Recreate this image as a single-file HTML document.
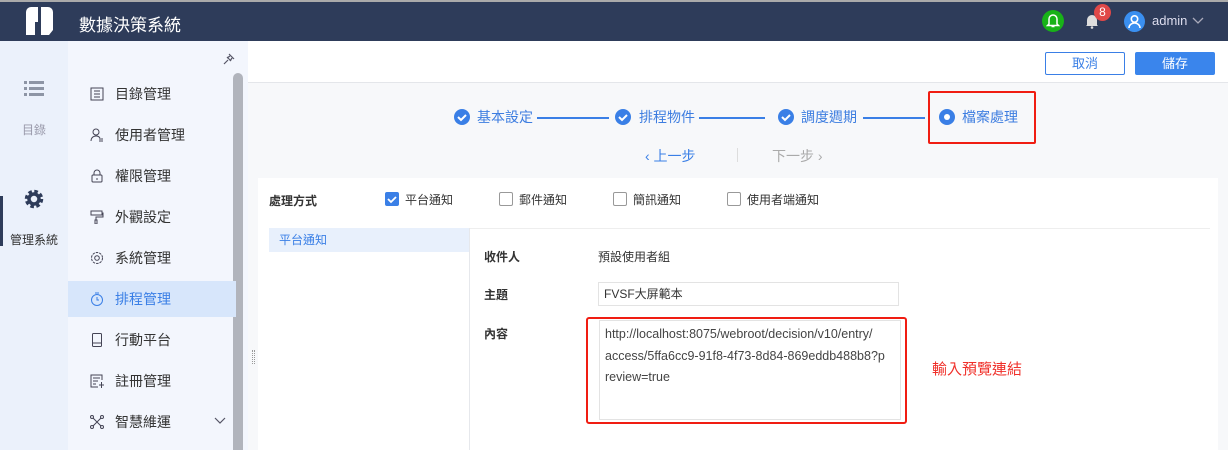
<!DOCTYPE html>
<html><head><meta charset="utf-8"><style>
*{margin:0;padding:0;box-sizing:border-box}
body{width:1228px;height:450px;overflow:hidden;position:relative;background:#f7f8fa;font-family:"Liberation Sans","Noto Sans CJK TC",sans-serif;font-size:13px;color:#333}
.a{position:absolute}
.hd{left:0;top:0;width:1228px;height:41px;background:#2e3c5a;border-top:2px solid #aaa}
.rail{left:0;top:41px;width:68px;height:409px;background:#ebf1fb}
.menu{left:68px;top:41px;width:180px;height:409px;background:#f3f6fd}
.mi{position:absolute;left:0;width:166px;height:36px;line-height:36px;padding-left:47px;font-size:14px;color:#333}
.ic{position:absolute;left:22px;top:11px;width:14px;height:14px}
.step{position:absolute;top:109px;font-size:14px;color:#3d7de0;line-height:16px}
.ck{position:absolute;width:16px;height:16px;border-radius:50%;background:#3a7fe6;top:109px}
.ln{position:absolute;top:117px;height:2px;background:#3a7fe6}
.cb{position:absolute;top:192px;width:14px;height:14px;border:1px solid #999;border-radius:2px;background:#fff}
.cl{position:absolute;top:191px;font-size:12px;color:#333}
</style></head><body>
<div class="a hd">
 <svg class="a" style="left:26px;top:5px" width="27" height="28" viewBox="0 0 27 28"><path d="M5 0h17a5 5 0 0 1 5 5v18l-4 5H0V5a5 5 0 0 1 5-5z" fill="#fff"/><rect x="12" y="0" width="3" height="11" fill="#2e3c5a"/><rect x="9" y="11" width="6" height="17" fill="#2e3c5a"/><rect x="9" y="11" width="3" height="4" fill="#fff"/></svg>
 <div class="a" style="left:79px;top:9px;color:#fff;font-size:17px">數據決策系統</div>
 <div class="a" style="left:1042px;top:8px;width:22px;height:22px;border-radius:50%;background:#18b218"></div>
 <svg class="a" style="left:1046px;top:11px" width="14" height="15" viewBox="0 0 14 15"><path d="M3 11V6a4 4 0 0 1 8 0v5l1.5 1.5h-11z M5.5 13.5h3" fill="none" stroke="#fff" stroke-width="1.5"/></svg>
 <svg class="a" style="left:1085px;top:11px" width="14" height="16" viewBox="0 0 14 16"><path d="M2 12V7a5 5 0 0 1 10 0v5l1 1H1z" fill="#ddd"/><circle cx="7" cy="14.5" r="1.3" fill="#ddd"/></svg>
 <div class="a" style="left:1094px;top:2px;width:17px;height:17px;border-radius:50%;background:#e04848;color:#fff;font-size:12px;text-align:center;line-height:17px">8</div>
 <div class="a" style="left:1124px;top:9px;width:21px;height:21px;border-radius:50%;background:#3a8ff0"></div>
 <svg class="a" style="left:1124px;top:9px" width="21" height="21" viewBox="0 0 21 21"><circle cx="10.5" cy="8" r="3.2" fill="none" stroke="#fff" stroke-width="1.6"/><path d="M5 17a5.5 5 0 0 1 11 0" fill="none" stroke="#fff" stroke-width="1.6"/></svg>
 <div class="a" style="left:1152px;top:11px;color:#dde;font-size:13px">admin</div>
 <svg class="a" style="left:1192px;top:15px" width="12" height="8"><path d="M1 1l5 5 5-5" fill="none" stroke="#aab" stroke-width="1.3"/></svg>
</div>
<div class="a rail">
 <svg class="a" style="left:24px;top:40px" width="20" height="15"><g fill="#8d95a5"><rect x="0" y="0" width="3" height="3"/><rect x="5" y="0" width="15" height="3"/><rect x="0" y="6" width="3" height="3"/><rect x="5" y="6" width="15" height="3"/><rect x="0" y="12" width="3" height="3"/><rect x="5" y="12" width="15" height="3"/></g></svg>
 <div class="a" style="left:22px;top:80px;color:#99a;font-size:12px">目錄</div>
 <div class="a" style="left:0;top:155px;width:3px;height:50px;background:#2e3c5a"></div>
 <svg class="a" style="left:24px;top:148px" width="20" height="20" viewBox="0 0 20 20"><circle cx="10" cy="10" r="7.5" fill="none" stroke="#2e3c5a" stroke-width="3.5" stroke-dasharray="3.5 2.4"/><circle cx="10" cy="10" r="5" fill="none" stroke="#2e3c5a" stroke-width="3.5"/></svg>
 <div class="a" style="left:10px;top:190px;color:#333;font-size:12px">管理系統</div>
</div>
<div class="a menu">
 <svg class="a" style="left:154px;top:11px" width="14" height="14"><path d="M2 12l4-4M5 5l4 4M7 2l5 5M8 4l-3 2M10 6l-2 3" stroke="#556" fill="none" stroke-width="1.2"/></svg>
 <div class="a" style="left:165px;top:32px;width:10px;height:377px;background:#b1b4bc;border-radius:5px 5px 0 0"></div>
 <div class="mi" style="top:35px"><svg class="ic"><rect x="1" y="1" width="12" height="12" fill="none" stroke="#445"/><path d="M4 4h6M4 7h6M4 10h6" stroke="#445"/></svg>目錄管理</div>
 <div class="mi" style="top:76px"><svg class="ic"><circle cx="6" cy="4" r="3" fill="none" stroke="#445"/><path d="M1 13a5 5 0 0 1 9-3M9 11h4M9 13h4" fill="none" stroke="#445"/></svg>使用者管理</div>
 <div class="mi" style="top:117px"><svg class="ic"><rect x="2" y="6" width="10" height="7" rx="1" fill="none" stroke="#445"/><path d="M4 6V4a3 3 0 0 1 6 0v2M7 9v2" fill="none" stroke="#445"/></svg>權限管理</div>
 <div class="mi" style="top:158px"><svg class="ic"><rect x="1" y="1" width="11" height="4" fill="none" stroke="#445"/><path d="M12 3h1v4H6v3M5 10h2v4H5z" fill="none" stroke="#445"/></svg>外觀設定</div>
 <div class="mi" style="top:199px"><svg class="ic"><circle cx="7" cy="7" r="5.5" fill="none" stroke="#445" stroke-dasharray="2.5 1"/><circle cx="7" cy="7" r="2.3" fill="none" stroke="#445"/></svg>系統管理</div>
 <div class="mi" style="top:240px;background:#d7e6fb;width:168px;color:#3a7fe6"><svg class="ic"><circle cx="7" cy="8" r="5.5" fill="none" stroke="#3a7fe6"/><path d="M5 1h4M7 5v3h2" fill="none" stroke="#3a7fe6"/></svg>排程管理</div>
 <div class="mi" style="top:281px"><svg class="ic"><rect x="2.5" y="0.5" width="9" height="13" rx="1" fill="none" stroke="#445"/><path d="M3 10h8" stroke="#445"/></svg>行動平台</div>
 <div class="mi" style="top:322px"><svg class="ic"><path d="M12 6V1H1v12h7M3 4h7M3 7h5M3 10h3M9 11h5M11.5 8v6" fill="none" stroke="#445"/></svg>註冊管理</div>
 <div class="mi" style="top:363px"><svg class="ic"><circle cx="2" cy="2" r="1.5" fill="none" stroke="#445"/><circle cx="12" cy="2" r="1.5" fill="none" stroke="#445"/><circle cx="2" cy="12" r="1.5" fill="none" stroke="#445"/><circle cx="12" cy="12" r="1.5" fill="none" stroke="#445"/><path d="M3 3l8 8M11 3l-8 8" stroke="#445"/></svg>智慧維運</div>
 <svg class="a" style="left:146px;top:376px" width="12" height="8"><path d="M1 1l5 5 5-5" fill="none" stroke="#556" stroke-width="1.2"/></svg>
</div>
<div class="a" style="left:248px;top:41px;width:980px;height:42px;background:#fff;border-bottom:1px solid #e4e6ea"></div>
<div class="a" style="left:1045px;top:52px;width:80px;height:23px;border:1px solid #3a7fe6;border-radius:2px;background:#fff;color:#3a7fe6;text-align:center;line-height:21px;font-size:13px">取消</div>
<div class="a" style="left:1135px;top:52px;width:80px;height:23px;background:#3a85ec;border-radius:2px;color:#fff;text-align:center;line-height:23px;font-size:13px">儲存</div>
<div class="a" style="left:252px;top:350px;width:3px;height:14px;border-left:1px dotted #999;border-right:1px dotted #999"></div>

<div class="ck" style="left:454px"></div><div class="step" style="left:477px">基本設定</div>
<div class="ln" style="left:537px;width:72px"></div>
<div class="ck" style="left:615px"></div><div class="step" style="left:639px">排程物件</div>
<div class="ln" style="left:699px;width:66px"></div>
<div class="ck" style="left:778px"></div><div class="step" style="left:801px">調度週期</div>
<div class="ln" style="left:863px;width:62px"></div>
<div class="ck" style="left:939px"></div><div class="a" style="left:944px;top:114px;width:6px;height:6px;border-radius:50%;background:#fff"></div><div class="step" style="left:962px">檔案處理</div>
<svg class="a" style="left:454px;top:109px" width="500" height="16"><g fill="none" stroke="#fff" stroke-width="2"><path d="M4 8l3 3 5-5"/><path d="M165 8l3 3 5-5"/><path d="M328 8l3 3 5-5"/></g></svg>
<div class="a" style="left:928px;top:91px;width:108px;height:53px;border:2px solid #f01d12;border-radius:2px"></div>
<div class="a" style="left:645px;top:146px;color:#3a7fe6;font-size:14px">‹ 上一步</div>
<div class="a" style="left:737px;top:148px;width:1px;height:14px;background:#ddd"></div>
<div class="a" style="left:772px;top:146px;color:#aaa;font-size:14px">下一步 ›</div>

<div class="a" style="left:258px;top:178px;width:960px;height:272px;background:#fff"></div>
<div class="a" style="left:269px;top:192px;font-weight:bold;font-size:12px;color:#333">處理方式</div>
<div class="cb" style="left:385px;background:#3a7fe6;border-color:#3a7fe6"></div>
<svg class="a" style="left:385px;top:192px" width="14" height="14"><path d="M3 7l3 3 5-5" fill="none" stroke="#fff" stroke-width="1.8"/></svg>
<div class="cl" style="left:405px">平台通知</div>
<div class="cb" style="left:499px"></div><div class="cl" style="left:519px">郵件通知</div>
<div class="cb" style="left:613px"></div><div class="cl" style="left:633px">簡訊通知</div>
<div class="cb" style="left:727px"></div><div class="cl" style="left:747px">使用者端通知</div>
<div class="a" style="left:269px;top:228px;width:200px;height:24px;background:#e8f0fc;color:#3a7fe6;font-size:12px;line-height:24px;padding-left:10px">平台通知</div>
<div class="a" style="left:469px;top:228px;width:1px;height:222px;background:#e6e8ec"></div>
<div class="a" style="left:470px;top:228px;width:740px;height:1px;background:#eee"></div>
<div class="a" style="left:484px;top:248px;font-weight:bold;font-size:12px">收件人</div>
<div class="a" style="left:598px;top:248px;font-size:12px">預設使用者組</div>
<div class="a" style="left:484px;top:286px;font-weight:bold;font-size:12px">主題</div>
<div class="a" style="left:598px;top:282px;width:301px;height:24px;border:1px solid #e3e3e3;font-size:12px;line-height:22px;padding-left:5px">FVSF大屏範本</div>
<div class="a" style="left:484px;top:325px;font-weight:bold;font-size:12px">內容</div>
<div class="a" style="left:599px;top:320px;width:302px;height:100px;border:1px solid #e3e3e3;font-size:12.5px;line-height:21.5px;padding:3px 0 0 5px;color:#444">http://localhost:8075/webroot/decision/v10/entry/<br>access/5ffa6cc9-91f8-4f73-8d84-869eddb488b8?p<br>review=true</div>
<div class="a" style="left:586px;top:317px;width:321px;height:107px;border:2px solid #f01d12;border-radius:3px"></div>
<div class="a" style="left:932px;top:358px;color:#f0302a;font-size:15px">輸入預覽連結</div>
</body></html>
